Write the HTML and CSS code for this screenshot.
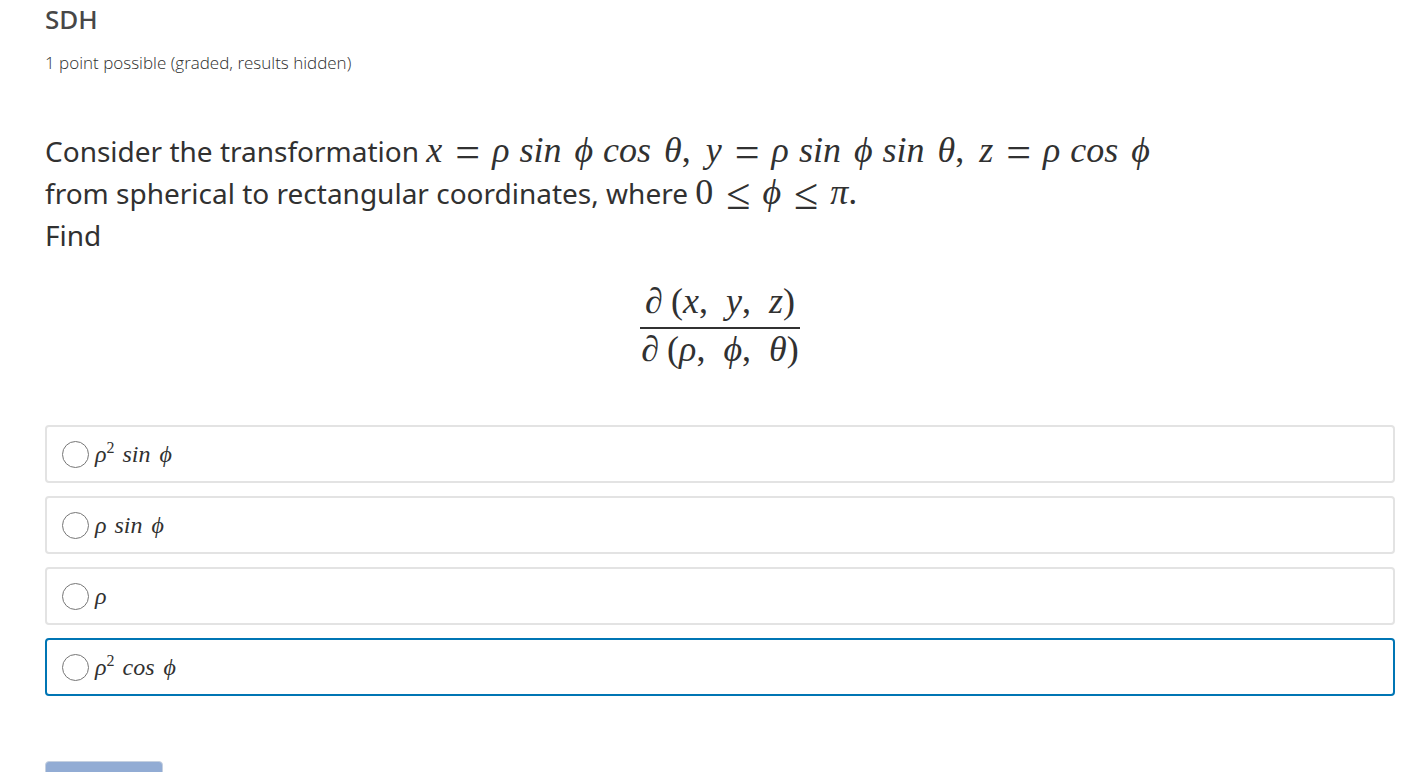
FILE: index.html
```
<!DOCTYPE html>
<html lang="en">
<head>
    <meta charset="UTF-8">
    <meta name="viewport" content="width=device-width, initial-scale=1.0">
    <title>SDH</title>
    <link rel="stylesheet" href="styles.css">
</head>
<body>
    <main class="problem">
        <h3 class="problem_title">SDH</h3>
        <p class="problem_progress">1 point possible (graded, results hidden)</p>
        <form class="problem_form">
            <div class="question">
                <p>Consider the transformation <span class="math"><i>x</i><span class="rel">=</span><i>ρ</i><i class="fn">sin</i><i class="phi">ϕ</i><i class="fn">cos</i><i>θ</i><span class="comma">,</span><i>y</i><span class="rel">=</span><i>ρ</i><i class="fn">sin</i><i class="phi">ϕ</i><i class="fn">sin</i><i>θ</i><span class="comma">,</span><i>z</i><span class="rel">=</span><i>ρ</i><i class="fn">cos</i><i class="phi">ϕ</i></span></p>
                <p>from spherical to rectangular coordinates, where <span class="math"><span>0</span><span class="rel">≤</span><i class="phi">ϕ</i><span class="rel">≤</span><i>π</i><span>.</span></span></p>
                <p>Find</p>
            </div>
            <div class="math fraction">
                <div class="top"><i>∂</i><span class="paren">(</span><i>x</i><span class="comma">,</span><i>y</i><span class="comma">,</span><i>z</i><span>)</span></div>
                <div class="bottom"><i>∂</i><span class="paren">(</span><i>ρ</i><span class="comma">,</span><i class="phi">ϕ</i><span class="comma">,</span><i>θ</i><span>)</span></div>
            </div>
            <div class="choices">
                <label class="choice">
                    <input type="radio" name="answer" value="0">
                    <span class="math"><i>ρ</i><sup>2</sup><i class="fn">sin</i><i class="phi">ϕ</i></span>
                </label>
                <label class="choice">
                    <input type="radio" name="answer" value="1">
                    <span class="math"><i>ρ</i><i class="fn">sin</i><i class="phi">ϕ</i></span>
                </label>
                <label class="choice">
                    <input type="radio" name="answer" value="2">
                    <span class="math"><i>ρ</i></span>
                </label>
                <label class="choice active">
                    <input type="radio" name="answer" value="3">
                    <span class="math"><i>ρ</i><sup>2</sup><i class="fn">cos</i><i class="phi">ϕ</i></span>
                </label>
            </div>
            <button class="submit" type="submit" aria-label="Submit" disabled></button>
        </form>
    </main>
</body>
</html>
```

FILE: styles.css
```
*{
    box-sizing: border-box;
}
body{
    margin: 0;
    background-color: white;
    color: #313131;
    font-family: "Noto Sans", "Open Sans", sans-serif;
}
.problem{
    padding: 3px 22px 0 45px;
}
.problem_title{
    margin: 0;
    color: #474747;
    font-size: 26px;
    font-weight: 500;
    line-height: 32px;
}
.problem_progress{
    margin: 15px 0 0;
    color: #2e2e2e;
    font-family: "Open Sans", sans-serif;
    font-size: 17px;
    font-weight: 300;
    line-height: 26px;
}
.question{
    margin-top: 54px;
    font-size: 28px;
    line-height: 42px;
}
.question>p{
    margin: 0;
}

/* formulas */
.math{
    font-family: "Liberation Serif", "DejaVu Serif", serif;
    font-size: 36px;
    line-height: 1;
    white-space: nowrap;
}
.math .rel{
    margin: 0 12px 0 13px;
    font-size: 44px;
    line-height: 0;
    vertical-align: -5px;
}
.math .fn{
    margin: 0 13px 0 10px;
}
.math .comma{
    margin-right: 15px;
}
.math .paren{
    margin-left: 8px;
}
.fraction{
    width: fit-content;
    margin: 25px auto 0;
    text-align: center;
}
.fraction .comma{
    margin-right: 18px;
}
.fraction .top{
    padding: 0 3px 6px;
    border-bottom: 2px solid #313131;
    line-height: 40px;
}
.fraction .bottom{
    padding: 0 1px;
    line-height: 40px;
}

/* answers */
.choices{
    display: flex;
    flex-direction: column;
    gap: 13px;
    margin-top: 56px;
}
.choice{
    display: flex;
    align-items: center;
    gap: 6px;
    height: 58px;
    padding: 0 15px;
    border: 2px solid #e3e3e3;
    border-radius: 4px;
}
.choice.active{
    border-color: #0075b4;
}
.choice input{
    width: 27px;
    height: 27px;
    margin: 0;
}
.choice .math{
    font-size: 24px;
}
.choice .fn{
    margin: 0 9px 0 8px;
}
.choice sup{
    font-size: 16px;
    line-height: 0;
}
.submit{
    display: block;
    width: 118px;
    height: 44px;
    margin-top: 65px;
    border: 1px solid #c5d0e0;
    border-radius: 4px;
    background-color: #92acd4;
}
```
